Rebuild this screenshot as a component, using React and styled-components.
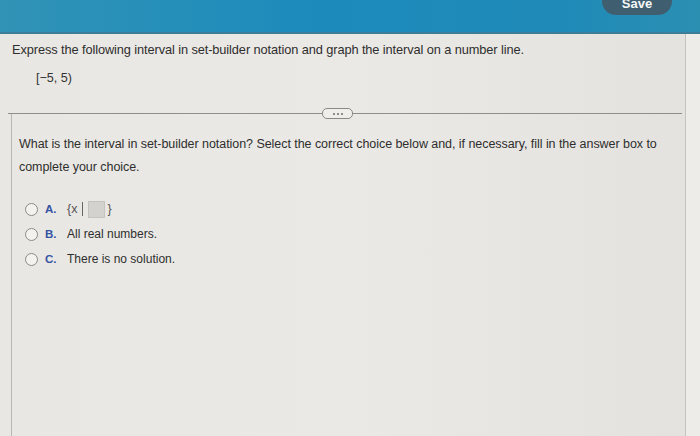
import React from "react";
import styled, { createGlobalStyle } from "styled-components";

const Global = createGlobalStyle`
  html, body { margin: 0; padding: 0; }
  body {
    width: 700px; height: 436px; overflow: hidden;
    background: #e7e5e1;
    font-family: "Liberation Sans", Arial, sans-serif;
  }
`;

const Page = styled.div`
  width: 700px;
  height: 436px;
  display: flex;
  flex-direction: column;
  background: linear-gradient(90deg, #e9e7e3 0%, #ebe9e5 50%, #e4e2de 100%);
  overflow: hidden;
`;

const Header = styled.div`
  height: 32px;
  flex: none;
  background: linear-gradient(90deg, #3193b6 0%, #1c8bbc 45%, #1f8ab8 80%, #2b8fb2 100%);
  border-bottom: 2px solid #3c7e98;
  display: flex;
  justify-content: flex-end;
  align-items: flex-start;
  padding-right: 28px;
`;

const SaveButton = styled.div`
  width: 70px;
  height: 15px;
  background: #3f5e70;
  border-radius: 0 0 14px 14px;
  color: #f4f6f8;
  font-weight: 700;
  font-size: 13px;
  line-height: 8px;
  text-align: center;
  overflow: hidden;
`;

const Body = styled.div`
  flex: 1;
  display: flex;
  min-height: 0;
`;

const Main = styled.div`
  flex: 1;
  display: flex;
  flex-direction: column;
`;

const Top = styled.div`
  padding: 8px 0 0 12px;
  flex: none;
`;

const Prompt = styled.p`
  margin: 0;
  font-size: 12.8px;
  color: #2e2e2e;
  letter-spacing: -0.1px;
`;

const Interval = styled.p`
  margin: 14px 0 0 24px;
  font-size: 12.6px;
  color: #333;
`;

const Divider = styled.div`
  position: relative;
  margin: 28px 3px 0 -4px;
  height: 1px;
  background: #8f8e8b;
`;

const Pill = styled.div`
  position: absolute;
  top: -5px;
  left: 314px;
  width: 29px;
  height: 9px;
  border: 1px solid #8a8986;
  border-radius: 5px;
  background: #f0eeea;
  display: flex;
  align-items: center;
  justify-content: center;
  gap: 2px;
`;

const Dot = styled.span`
  width: 2px;
  height: 2px;
  border-radius: 1px;
  background: #6e6d6a;
`;

const Lower = styled.div`
  flex: 1;
  margin-left: 11px;
  border-left: 1px solid #b9b7b3;
  padding-top: 19px;
`;

const Question = styled.p`
  margin: 0 24px 0 7px;
  font-size: 12.5px;
  line-height: 23px;
  color: #2e2e2e;
  letter-spacing: -0.05px;
`;

const Options = styled.div`
  margin: 21px 0 0 13px;
  display: flex;
  flex-direction: column;
  gap: 7px;
`;

const Option = styled.div`
  display: flex;
  align-items: center;
  height: 18px;
  font-size: 12px;
  color: #2e2e2e;
`;

const Radio = styled.span`
  width: 11px;
  height: 11px;
  border-radius: 50%;
  border: 1.3px solid #8a8a8a;
  background: #f3f2ef;
  margin-right: 7px;
  flex: none;
`;

const Letter = styled.span`
  color: #3553a3;
  font-weight: 700;
  width: 22px;
  font-size: 11.5px;
`;

const Brace = styled.span`
  color: #555;
  font-size: 12.5px;
  display: flex;
  align-items: center;
  gap: 2px;
`;

const Bar = styled.span`
  width: 1px;
  height: 14px;
  background: #666;
  margin: 0 3px;
`;

const AnswerBox = styled.span`
  width: 15px;
  height: 15px;
  background: #d3d2cf;
  border: 1px solid #c4c3c0;
`;

const RightEdge = styled.div`
  width: 14px;
  flex: none;
  border-left: 1px solid #c5c3bf;
  background: #eeece8;
`;

export default function App() {
  return (
    <Page>
      <Global />
      <Header>
        <SaveButton>Save</SaveButton>
      </Header>
      <Body>
        <Main>
          <Top>
            <Prompt>Express the following interval in set-builder notation and graph the interval on a number line.</Prompt>
            <Interval>[−5, 5)</Interval>
            <Divider>
              <Pill>
                <Dot />
                <Dot />
                <Dot />
              </Pill>
            </Divider>
          </Top>
          <Lower>
            <Question>
              What is the interval in set-builder notation? Select the correct choice below and, if necessary, fill in the answer box to complete your choice.
            </Question>
            <Options>
              <Option>
                <Radio />
                <Letter>A.</Letter>
                <Brace>
                  {"{x"}
                  <Bar />
                  <AnswerBox />
                  {"}"}
                </Brace>
              </Option>
              <Option>
                <Radio />
                <Letter>B.</Letter>
                All real numbers.
              </Option>
              <Option>
                <Radio />
                <Letter>C.</Letter>
                There is no solution.
              </Option>
            </Options>
          </Lower>
        </Main>
        <RightEdge />
      </Body>
    </Page>
  );
}
